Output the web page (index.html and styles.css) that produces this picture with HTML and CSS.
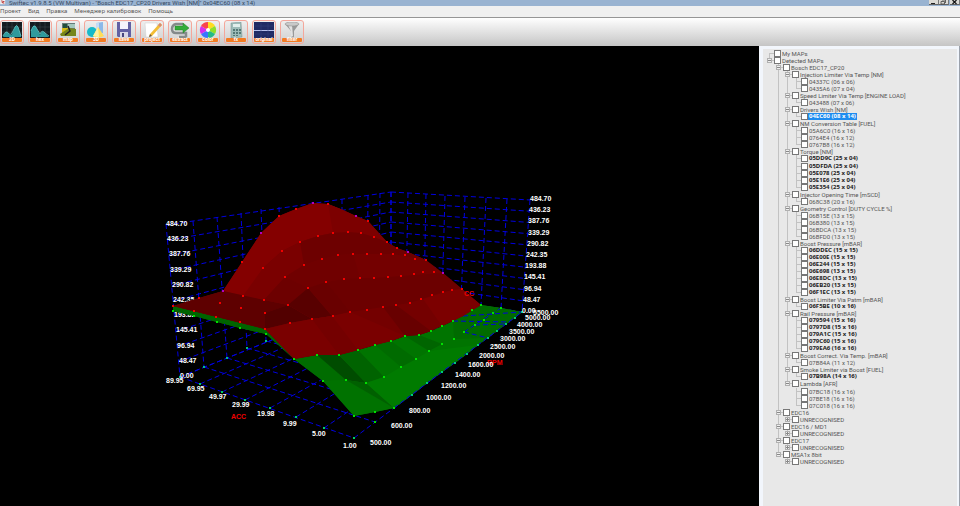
FILE: index.html
```html
<!DOCTYPE html>
<html lang="ru">
<head>
<meta charset="utf-8">
<title>Swiftec</title>
<link rel="stylesheet" href="styles.css">
</head>
<body>
<header class="titlebar">
  <svg class="app-icon" viewBox="0 0 8 6"><path d="M0 0h6v5H0z" fill="#f4f4f4"/><path d="M1 1l4 1-3 1 3 1" fill="none" stroke="#b33"/></svg>
  <span class="caption">Swiftec v1.9.8.5 (VW Multivan) - "Bosch EDC17_CP20 Drivers Wish [NM]" 0x04EC60 (08 x 14)</span>
  <div class="window-buttons">
    <button type="button" aria-label="Minimize"><svg viewBox="0 0 9 6"><path d="M2 3.500h4" stroke="#222" stroke-width="1"/></svg></button>
    <button type="button" aria-label="Restore"><svg viewBox="0 0 9 6"><path d="M3 0h3.500v3M2 1.500h3.500V4H2z" fill="none" stroke="#444" stroke-width=".8"/></svg></button>
    <button type="button" class="close" aria-label="Close"><svg viewBox="0 0 9 6"><path d="M2.500 0l4 4M6.500 0l-4 4" stroke="#111" stroke-width="1.200"/></svg></button>
  </div>
</header>
<nav class="menubar">
  <button type="button">Проект</button>
  <button type="button">Вид</button>
  <button type="button">Правка</button>
  <button type="button">Менеджер калибровок</button>
  <button type="button">Помощь</button>
</nav>
<div class="toolbar">
  <button type="button" class="tool"><svg viewBox="0 0 20 16"><path d="M0 0h20v16H0z" fill="#141c20"/><path d="M0 5h20M0 10h20M5 0v16M10 0v16M15 0v16" stroke="#3c484c" stroke-width=".5"/><path d="M1 15q3-8 6-3 1.500 2 3 0l3-7q1.500-3 3 0l3 9v1z" fill="#2f9a9c"/><path d="M1 14q3-7 6-2 1.500 1 3-1l3-6q1.500-3 3 0l3 9" fill="none" stroke="#65c8c8" stroke-width=".8"/></svg><span>2D</span></button>
  <button type="button" class="tool"><svg viewBox="0 0 20 16"><path d="M0 0h20v16H0z" fill="#141c20"/><path d="M0 5h20M0 10h20M5 0v16M10 0v16M15 0v16" stroke="#3c484c" stroke-width=".5"/><path d="M1 15V9q3-10 6-2l3 6q2-6 5-2l4 4z" fill="#2f9a9c"/><path d="M1 9q3-9 6-2l3 5q2-5 5-1l4 3" fill="none" stroke="#65c8c8" stroke-width=".8"/></svg><span>hex</span></button>
  <button type="button" class="tool"><svg viewBox="0 0 20 16"><path d="M4 1h13v11H4z" fill="#667b79"/><path d="M4 6h6v6H4z" fill="#d3b919"/><path d="M10 2h7v4h-7z" fill="#a4c8bd"/><path d="M2 12l9-6 7 1v7H3z" fill="#77851b"/><path d="M5 2h4v4H5z" fill="#234f3c"/><path d="M10 4l2 5-5 4" fill="none" stroke="#222" stroke-width="1.500"/></svg><span>map</span></button>
  <button type="button" class="tool"><svg viewBox="0 0 20 16"><path d="M10 1l7-1v11l-7 2z" fill="#8bb9e9"/><path d="M10 1h3v11h-3z" fill="#c2dcf7"/><circle cx="6" cy="10" r="5" fill="#18b9c9"/><path d="M12 5l6 9q-6 3-11 0z" fill="#ffdd57"/><path d="M12 5l1 10-6-1z" fill="#fff1a1"/></svg><span>3D</span></button>
  <button type="button" class="tool"><svg viewBox="0 0 20 16"><path d="M3 0h14v15H4l-1-1z" fill="#6261a4"/><path d="M6 0h8v7H6z" fill="#f4f4fc"/><path d="M6 10h8v5H6z" fill="#d7d7e7"/><path d="M8 11h2v4H8z" fill="#47467e"/></svg><span>save</span></button>
  <button type="button" class="tool"><svg viewBox="0 0 20 16"><path d="M3 1h12l1 14H4z" fill="#fff" stroke="#ccc" stroke-width=".5"/><path d="M18 1l2 2-10 11-3 1 1-3z" fill="#f3bd35"/><path d="M18 1l2 2-2 2-2-2z" fill="#d78973"/><path d="M7 15l1-3 2 2z" fill="#654"/></svg><span>project</span></button>
  <button type="button" class="tool"><svg viewBox="0 0 20 16"><path d="M13 2H6Q2 3 2 7q0 4 4 4h10v4H9" fill="none" stroke="#858a8a" stroke-width="2.500"/><path d="M5 4h8V1l6 5-6 5V8H5z" fill="#33ac39" stroke="#277d2b" stroke-width=".5"/></svg><span>extract</span></button>
  <button type="button" class="tool"><svg viewBox="0 0 20 16"><path d="M10 8V0a8 8 0 0 1 7 4z" fill="#ffdc20"/><path d="M10 8l7-4a8 8 0 0 1 0 8z" fill="#8fdf29"/><path d="M10 8l7 4a8 8 0 0 1-7 4z" fill="#24ba87"/><path d="M10 8v8a8 8 0 0 1-7-4z" fill="#3976ff"/><path d="M10 8l-7 4a8 8 0 0 1 0-8z" fill="#d52dee"/><path d="M10 8L3 4a8 8 0 0 1 7-4z" fill="#f9444c"/><circle cx="10" cy="8" r="2" fill="#fff"/></svg><span>color</span></button>
  <button type="button" class="tool"><svg viewBox="0 0 20 16"><path d="M5 1l10-1 1 15-11 1z" fill="#9dbcb8" stroke="#74918e" stroke-width=".5"/><path d="M7 2h7v3H7z" fill="#e1efec"/><path d="M7 7h2v2H7zM10 7h2v2h-2zM13 7h2v2h-2zM7 10h2v2H7zM10 10h2v2h-2zM13 10h2v2h-2zM7 13h2v1H7zM10 13h2v1h-2z" fill="#547875"/></svg><span>fx</span></button>
  <button type="button" class="tool"><svg viewBox="0 0 20 16"><path d="M0 0h20v16H0z" fill="#202b64"/><path d="M0 8.500h20" stroke="#b5bfec"/><path d="M1 4h18M1 12h18M7 1v14M14 1v14" stroke="#34407c" stroke-width=".5"/></svg><span>original</span></button>
  <button type="button" class="tool"><svg viewBox="0 0 20 16"><path d="M3 2h14l-5 7v6l-3 1V9z" fill="#999"/><path d="M6 3h4l1 11-2 1V9z" fill="#e2e2e2"/><ellipse cx="10" cy="2" rx="7" ry="2" fill="#c9c9c9" stroke="#888" stroke-width=".5"/></svg><span>filter</span></button>
</div>
<main class="workspace">
  <section class="plot"><svg id="plot" viewBox="0 46 759 460" role="img" aria-label="Drivers Wish"></svg></section>
  <aside class="sidebar"><ul class="tree" id="tree"></ul></aside>
</main>
<script src="app.js"></script>
</body>
</html>
```
FILE: styles.css
```css
* { box-sizing: border-box; }

body {
  --row: calc((100vh - 91px) / 59);
  margin: 0;
  height: 100vh;
  display: flex;
  flex-direction: column;
  overflow: hidden;
  background: #000;
  color: #555;
  font: 6px/7px Roboto, "Noto Sans", sans-serif;
}

button {
  margin: 0;
  padding: 0;
  border: 0;
  background: none;
  color: inherit;
  font: inherit;
}

.titlebar {
  flex: none;
  display: flex;
  align-items: flex-end;
  gap: 2px;
  height: 6px;
  overflow: hidden;
  background: #99b3d1;
  color: #35465c;
}
.app-icon { width: 7px; height: 5px; align-self: flex-start; }
.caption { flex: 1; white-space: nowrap; }
.window-buttons { display: flex; align-self: flex-start; }
.window-buttons button {
  width: 10px;
  height: 5px;
  background: #dcdad5;
  border-right: 1px solid #777;
  border-bottom: 1px solid #666;
}
.window-buttons .close { margin-left: 1px; }
.window-buttons svg { display: block; width: 9px; height: 6px; }

.menubar {
  flex: none;
  display: flex;
  align-items: center;
  gap: 7px;
  height: 12px;
  background: #f0f0f0;
  border-bottom: 1px solid #969696;
  font-family: "Noto Sans", sans-serif;
}

.toolbar {
  flex: none;
  display: flex;
  align-items: flex-start;
  gap: 4px;
  height: 28px;
  padding-top: 2px;
  background: linear-gradient(#fff, #f0f0f0 25%, #c5c5c5);
}
.tool {
  display: flex;
  flex-direction: column;
  align-items: center;
  justify-content: space-between;
  width: 24px;
  height: 24px;
  padding: 1px;
  border: 1px solid #f4a79b;
  border-radius: 3px;
  background: linear-gradient(#eee, #cfcfcf);
}
.tool svg { width: 20px; height: 16px; }
.tool span {
  width: 20px;
  height: 4px;
  border-radius: 1px;
  background: #f37b22;
  color: #fff;
  font-size: 5px;
  font-weight: 700;
  line-height: 3px;
}

.workspace {
  flex: 1;
  min-height: 0;
  display: flex;
}
.plot { flex: 1; min-width: 0; background: #000; }
.plot svg { display: block; width: 100%; height: 100%; }
.grid { fill: none; stroke: #0000e0; stroke-width: 1; stroke-dasharray: 5 3; }
.axis-label, .axis-name { font: 700 7px "Liberation Sans", sans-serif; }
.axis-label { fill: #fff; }
.axis-name { fill: #f00000; }

.sidebar {
  flex: 0 0 201px;
  padding: 3px 2px 0 4px;
  background: #f2f6fc;
  border-right: 1px solid #9ba1ab;
}
.tree {
  height: 100%;
  background: #e8e8e8;
}
.tree, .tree ul { list-style: none; margin: 0; }
.tree { padding: 1px 0 0 3px; }
.tree ul { padding: 0 0 0 9px; }
.tree li { position: relative; }
.tree li::before {
  content: "";
  position: absolute;
  left: 3px;
  top: 0;
  bottom: 0;
  border-left: 1px solid #c2c2c2;
}
.tree li:last-child::before { bottom: auto; height: calc(var(--row) / 2); }
.tree > li:first-child::before { top: 3px; }
.row {
  position: relative;
  display: flex;
  align-items: center;
  height: var(--row);
  padding-left: 3px;
  white-space: nowrap;
}
.row::before {
  content: "";
  width: 5px;
  border-top: 1px solid #c2c2c2;
}
.expander {
  position: absolute;
  left: 1px;
  top: 1px;
  width: 5px;
  height: 5px;
  border: 1px solid #b0b0b0;
  background: #eee;
}
.expander::before {
  content: "";
  position: absolute;
  inset: 1px 0 auto;
  border-top: 1px solid #888;
}
.expander.closed::after {
  content: "";
  position: absolute;
  inset: 0 auto 0 1px;
  border-left: 1px solid #888;
}
.row input {
  appearance: none;
  flex: none;
  width: 7px;
  height: 7px;
  margin: 0;
  background: #fff;
  border: 1px solid #777;
}
.row label { padding: 0 1px; line-height: 7px; }
.row .changed, .row .selected { font-family: "Noto Sans", sans-serif; font-weight: 700; }
.row .changed { color: #222; }
.row .selected { background: #1e8cf0; color: #fff; }
```
FILE: app.js
```js
/* Map tree: "*" marks a changed map, ">" the selected one, "+" a closed branch. */
const maps = [
  ["My MAPs"],
  ["Detected MAPs", [
    ["Bosch EDC17_CP20", [
      ["Injection Limiter Via Temp [NM]", [["04337C (06 x 06)"], ["0435A6 (07 x 04)"]]],
      ["Speed Limiter Via Temp [ENGINE LOAD]", [["043488 (07 x 06)"]]],
      ["Drivers Wish [NM]", [[">04EC60 (08 x 14)"]]],
      ["NM Conversion Table [FUEL]", [["05A6C0 (16 x 16)"], ["0764E4 (16 x 12)"], ["0767B8 (16 x 12)"]]],
      ["Torque [NM]", [["*05DD9C (25 x 04)"], ["*05DFDA (25 x 04)"], ["*05E078 (25 x 04)"], ["*05E1E6 (25 x 04)"], ["*05E354 (25 x 04)"]]],
      ["Injector Opening Time [mSCD]", [["068C38 (20 x 16)"]]],
      ["Geometry Control [DUTY CYCLE %]", [["06B15E (13 x 15)"], ["06B380 (13 x 15)"], ["06BDCA (13 x 15)"], ["06BFD0 (13 x 15)"]]],
      ["Boost Pressure [mBAR]", [["*06DDEC (15 x 15)"], ["*06E00E (15 x 15)"], ["*06E244 (15 x 15)"], ["*06E698 (13 x 15)"], ["*06E8DC (13 x 15)"], ["*06EB20 (13 x 15)"], ["*06F1EC (13 x 15)"]]],
      ["Boost Limiter Via Patm [mBAR]", [["*06F5BE (10 x 16)"]]],
      ["Rail Pressure [mBAR]", [["*079594 (15 x 16)"], ["*0797D8 (15 x 16)"], ["*079A1C (15 x 16)"], ["*079C60 (15 x 16)"], ["*079EA6 (16 x 16)"]]],
      ["Boost Correct. Via Temp. [mBAR]", [["07B84A (11 x 12)"]]],
      ["Smoke Limiter via Boost [FUEL]", [["*07B98A (14 x 16)"]]],
      ["Lambda [AFR]", [["07BC18 (16 x 16)"], ["07BE18 (16 x 16)"], ["07C018 (16 x 16)"]]]
    ]],
    ["EDC16", [["+UNRECOGNISED"]]],
    ["EDC16 / MD1", [["+UNRECOGNISED"]]],
    ["EDC17", [["+UNRECOGNISED"]]],
    ["MSA1x 8bit", [["+UNRECOGNISED"]]]
  ]]
];

let nextId = 0;
function branch(nodes) {
  return nodes.map(([name, children]) => {
    const id = "map-" + nextId++;
    const flag = "*>+".includes(name[0]) ? name[0] : "";
    const text = name.slice(flag.length);
    const style = flag === "*" ? "changed" : flag === ">" ? "selected" : "";
    const closed = flag === "+";
    const expander = children || closed
      ? `<button type="button" class="expander${closed ? " closed" : ""}" aria-label="Toggle"></button>` : "";
    return `<li><div class="row">${expander}<input type="checkbox" id="${id}"><label for="${id}" class="${style}">${text}</label></div>` +
      (children ? `<ul>${branch(children)}</ul>` : "") + "</li>";
  }).join("");
}
document.getElementById("tree").innerHTML = branch(maps);

/* Floor edges of the plot: 8 ACC positions by 14 RPM positions. */
const front = [[180,377],[200,384],[222,392],[245,400],[270,408],[296,417],[324,428],[354,438]];
const back = [[391,292],[406,294],[424,297],[442,300],[461,303],[481,305],[501,308],[522,312]];
const left = [[180,377],[204,367],[227,358],[247,348],[266,341],[283,334],[299,327],[314,321],[328,316],[342,311],[355,306],[367,301],[379,296],[391,292]];
const right = [[354,438],[375,422],[394,408],[412,395],[427,383],[442,372],[455,363],[467,354],[478,345],[488,338],[497,331],[506,324],[515,318],[522,312]];
const leftTop = [[166,224],[193,221],[217,217],[241,213],[261,209],[279,207],[296,204],[312,202],[327,200],[342,199],[356,197],[368,195],[380,193],[391,192]];
const backTop = [[391,192],[408,193],[426,194],[445,196],[465,197],[486,198],[507,199],[530,200]];

const out = [];
const line = (a, b) => out.push(`<path class="grid" d="M${a}L${b}"/>`);
const poly = (points, fill) => out.push(`<polygon points="${points}" fill="${fill}"/>`);
const dots = (points, fill) => points.forEach(([x, y]) =>
  out.push(`<rect x="${x - 1}" y="${y - 1}" width="2" height="2" fill="${fill}"/>`));
const text = (x, y, value, kind = "axis-label") =>
  out.push(`<text class="${kind}" x="${x}" y="${y + 3}">${value}</text>`);

front.forEach((p, i) => line(p, back[i]));
left.forEach((p, i) => line(p, right[i]));
left.forEach((p, i) => { if (i < 6 || i % 2 || i > 10) line(leftTop[i], p); });
back.forEach((p, i) => line(backTop[i], p));
for (let k = 0; k <= 10; k++) {
  line([166 + 1.4 * k, 225 + 15.2 * k], [391, 192 + 10 * k]);
  line([391, 192 + 10 * k], [530 - 0.8 * k, 200 + 11.2 * k]);
}
dots(front, "#00d060");
dots(left.slice(0, 5), "#00c080");

const levels = ["484.70", "436.23", "387.76", "339.29", "290.82", "242.35", "193.88", "145.41", "96.94", "48.47", "0.00"];
levels.forEach((v, k) => text(Math.round(166 + 1.4 * k), Math.round(223 + 15.2 * k), v));

/* Green surface */
poly("173,311 173,306 265,329 294,359 317,355 339,355 358,350 375,345 391,341 405,336 419,335 431,331 442,326 453,321 463,316 472,310 481,305 501,308 522,312 515,318 506,324 497,331 488,338 478,345 467,354 455,363 442,372 427,383 412,395 394,408 375,412 354,416 323,381 294,359 266,334 240,328 217,322 194,316", "#007400");
poly("294,359 317,355 346,380 323,381", "#006c00");
poly("317,355 339,355 366,383 346,380", "#004c00");
poly("339,355 358,350 384,377 366,383", "#006300");
poly("323,381 346,380 394,408 375,412 354,416", "#007200");
poly("346,380 366,383 394,408", "#006000");
poly("366,383 384,377 401,367 416,359 429,351 478,345 467,354 455,363 442,372 427,383 412,395 394,408", "#007b00");
poly("375,345 391,341 416,359 401,367", "#006b00");
poly("405,336 419,335 442,344 429,351", "#006500");
poly("453,321 481,305 501,308 522,312 506,324 488,338 454,339", "#006b00");
poly("173,306 265,329 294,359 266,334 240,328 194,316 173,311", "#006400");
[[[463,316],[522,312]], [[453,321],[510,322]], [[464,332],[501,308]], [[475,325],[506,324]], [[464,332],[488,338]], [[394,408],[522,312]]]
  .forEach(([a, b]) => line(a, b));

/* Red surface */
poly("173,306 199,298 223,291 242,262 261,233 279,216 296,209 313,203 328,204 343,210 356,216 368,221 387,242 397,248 408,252 426,260 443,273 462,289 481,305 463,316 453,321 442,326 431,331 419,335 405,336 391,341 375,345 358,350 339,355 317,355 294,359 265,329", "#740000");
poly("223,291 242,262 261,233 279,216 296,209 313,203 328,204 343,210 333,233 318,236 300,242 282,251 263,268 264,300", "#840000");
poly("328,204 343,210 356,216 368,221 387,242 374,237 348,232 333,233", "#7c0000");
poly("263,268 282,251 300,242 318,236 333,233 348,232 322,259 304,265 285,277 264,300 243,296", "#7a0000");
poly("300,242 318,236 333,233 348,232 361,233 374,237 386,242 397,248 408,252 426,260 393,254 367,254 353,254 338,255 322,259 304,265", "#6d0000");
poly("285,277 304,265 322,259 338,255 353,254 360,278 344,279 326,282 308,288", "#700000");
poly("326,282 344,279 360,278 374,278 401,276 443,273 462,289 443,292 410,303 383,307 350,312 332,316", "#6c0000");
poly("173,306 199,298 223,291 264,300 288,305 265,313 265,329", "#5e0000");
poly("264,300 285,277 308,288 288,305", "#6d0000");
poly("265,313 288,305 312,319 290,323 265,329", "#520000");
poly("288,305 308,288 332,316 312,319", "#580000");
poly("308,288 326,282 350,312 332,316", "#690000");
poly("265,329 290,323 312,319 332,316 350,312 405,336 391,341 375,345 358,350 339,355 317,355 294,359", "#7a0000");
poly("312,319 332,316 358,350 339,355", "#740000");
poly("383,307 396,305 431,331 419,335 405,336", "#680000");
poly("423,299 452,290 462,289 481,305 463,316 442,326", "#7c0000");

dots([[199,298],[242,262],[279,216],[296,209],[328,204],[368,221],[387,242],[397,248],[426,260],[462,289],
  [263,268],[282,251],[300,242],[318,236],[333,233],[348,232],[361,233],[374,237],
  [243,296],[285,277],[304,265],[322,259],[338,255],[353,254],[367,254],[381,254],[393,254],[405,255],[415,259],
  [264,300],[308,288],[326,282],[344,279],[360,278],[374,278],[388,277],[401,276],[414,274],[423,272],[434,272],
  [220,303],[241,308],[288,305],[333,316],[350,312],[367,310],[383,307],[396,305],[410,303],[421,299],[432,295],[443,292],[452,290],
  [265,313],[290,323],[312,319],[173,306],[194,311],[216,317],[240,322],[265,329]], "#f00000");
dots([[223,291],[261,233],[313,203],[356,216],[408,252],[443,273]], "#b000c0");
dots([[173,311],[194,316],[217,322],[240,328],[266,334],[294,359],[317,355],[339,355],[358,350],[375,345],[391,341],
  [405,336],[419,335],[431,331],[442,326],[453,321],[472,310],[481,305],[323,381],[346,380],[366,383],[384,377],[401,367],
  [416,359],[429,351],[442,344],[454,339],[464,332],[475,325],[484,320],[493,313],[354,416],[375,412],[394,408],[375,422]], "#00e000");
dots(right.slice(3), "#00c878");
dots([[501,308]], "#00e000");

levels.forEach((v, k) => text(Math.round(530 - 0.8 * k), Math.round(198 + 11.2 * k), v));
[[166,380,"89.95"],[187,388,"69.95"],[209,396,"49.97"],[232,404,"29.99"],[257,413,"19.98"],[283,423,"9.99"],[312,433,"5.00"],[343,445,"1.00"]]
  .forEach(p => text(...p));
text(231, 416, "ACC", "axis-name");
text(464, 293, "CC", "axis-name");
text(487, 362, "RPM", "axis-name");
[[370,442,"500.00"],[391,425,"600.00"],[409,410,"800.00"],[426,397,"1000.00"],[441,385,"1200.00"],[455,374,"1400.00"],[468,364,"1600.00"],
 [479,355,"2000.00"],[490,346,"2500.00"],[500,338,"3000.00"],[509,331,"3500.00"],[517,324,"4000.00"],[525,317,"5000.00"],[533,312,"5500.00"]]
  .forEach(p => text(...p));

document.getElementById("plot").innerHTML = out.join("");
```
